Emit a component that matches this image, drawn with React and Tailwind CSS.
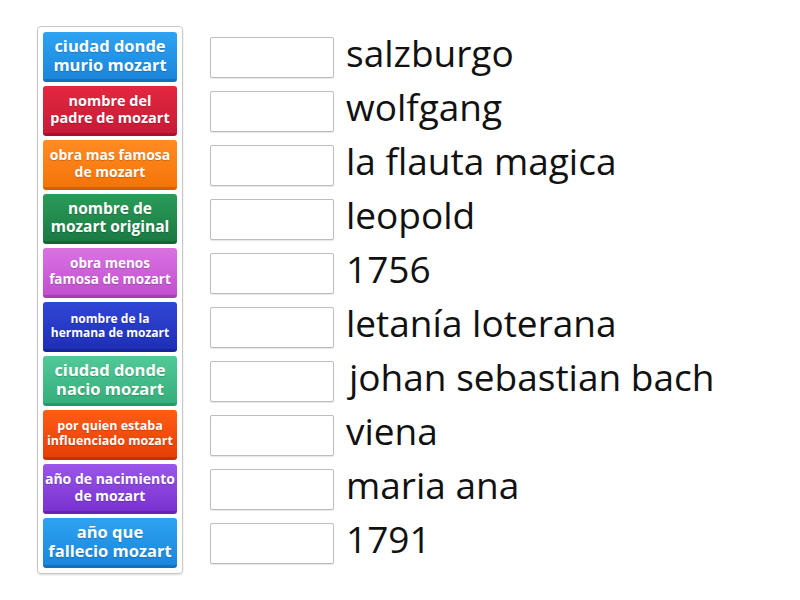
const tiles = [
    { lines: ['ciudad donde', 'murio mozart'], size: 'text-[16.5px]', color: 'from-[#2ea3f1] to-[#1a86dc] border-[#1470bd]' },
    { lines: ['nombre del', 'padre de mozart'], size: 'text-[14.5px]', color: 'from-[#e3283f] to-[#c81a37] border-[#a8122c]' },
    { lines: ['obra mas famosa', 'de mozart'], size: 'text-[14px]', color: 'from-[#ff8c22] to-[#f47406] border-[#d45f00]' },
    { lines: ['nombre de', 'mozart original'], size: 'text-[15.5px]', color: 'from-[#2a9c58] to-[#1b7a43] border-[#146535]' },
    { lines: ['obra menos', 'famosa de mozart'], size: 'text-[13.5px]', color: 'from-[#da72e2] to-[#c24fcf] border-[#a83bb6]' },
    { lines: ['nombre de la', 'hermana de mozart'], size: 'text-[12px]', color: 'from-[#3146d8] to-[#1f2fb6] border-[#17249a]' },
    { lines: ['ciudad donde', 'nacio mozart'], size: 'text-[16.5px]', color: 'from-[#52ca97] to-[#35ae7b] border-[#2a9567]' },
    { lines: ['por quien estaba', 'influenciado mozart'], size: 'text-[12.5px]', color: 'from-[#ff5c16] to-[#e63f07] border-[#c53200]' },
    { lines: ['año de nacimiento', 'de mozart'], size: 'text-[14px]', color: 'from-[#9a55ea] to-[#7a31d1] border-[#6424b5]' },
    { lines: ['año que', 'fallecio mozart'], size: 'text-[16.5px]', color: 'from-[#2ea3f1] to-[#1a86dc] border-[#1470bd]' },
]

// second-to-last flag nudges the one answer that sits a bit further right
const answers = [
    { text: 'salzburgo' },
    { text: 'wolfgang' },
    { text: 'la flauta magica' },
    { text: 'leopold' },
    { text: '1756' },
    { text: 'letanía loterana' },
    { text: 'johan sebastian bach', nudge: true },
    { text: 'viena' },
    { text: 'maria ana' },
    { text: '1791' },
]

export default function App() {
    return (
        <div className="w-[800px] h-[600px] bg-white flex items-start pt-[26px] pl-[37px] font-['Open_Sans',sans-serif]">
            <div className="w-[146px] border border-[#c8c8c8] rounded-[4px] p-[5px] flex flex-col gap-[4px] shadow-[0_1px_2px_rgba(0,0,0,0.15)]">
                {tiles.map(t => (
                    <div
                        key={t.lines.join(' ')}
                        className={`h-[50px] rounded-[3px] bg-gradient-to-b border-b-[3px] ${t.color} flex flex-col items-center justify-center text-center text-white font-bold leading-[1.15] whitespace-nowrap ${t.size} [text-shadow:0_1px_1px_rgba(0,0,0,0.2)]`}
                    >
                        {t.lines.map(l => <span key={l}>{l}</span>)}
                    </div>
                ))}
            </div>

            <div className="flex flex-col gap-[4px] mt-[6px] ml-[27px]">
                {answers.map(a => (
                    <div key={a.text} className="h-[50px] flex items-center gap-[12px]">
                        <div className="w-[124px] h-[41px] shrink-0 border border-[#bdbdbd] rounded-[2px] bg-white shadow-[0_1px_1px_rgba(0,0,0,0.1)]"></div>
                        <span className={`text-[37px] text-[#111] leading-none whitespace-nowrap -mt-[9px] ${a.nudge ? 'ml-[3px]' : ''}`}>{a.text}</span>
                    </div>
                ))}
            </div>
        </div>
    )
}
